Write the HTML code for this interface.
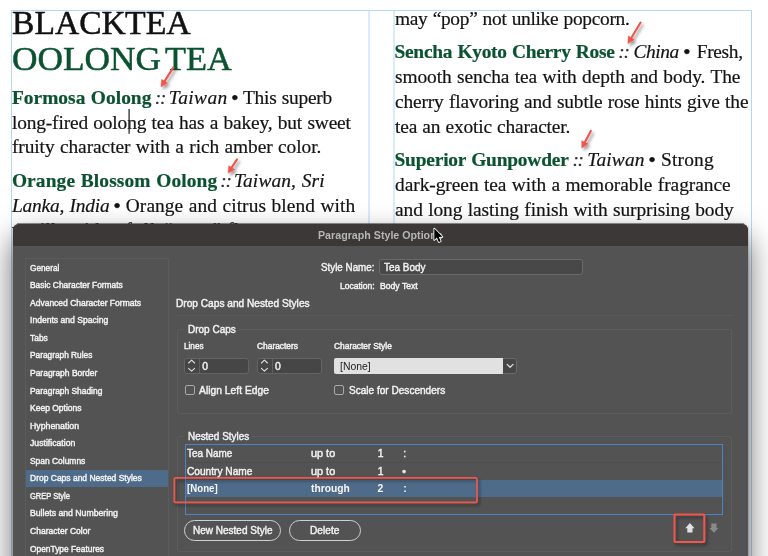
<!DOCTYPE html>
<html lang="en">
<head>
<meta charset="utf-8">
<title>Paragraph Style Options</title>
<style>
html,body{margin:0;padding:0;background:#fff;}
body{width:768px;height:556px;position:relative;overflow:hidden;}
.abs,.t,.abs *{position:absolute;box-sizing:border-box;}
.t{white-space:pre;display:block;transform-origin:0 50%;}
#doc{left:0;top:0;width:768px;height:556px;}
#doc,#dlgc{will-change:transform;}
#doc .t{word-spacing:.6px;-webkit-text-stroke:.2px currentColor;}
.guide{background:#b3d7f8;}
#dialog{left:13px;top:224px;width:735px;height:360px;background:#535353;border-radius:6px 6px 0 0;
  box-shadow:0 14px 30px rgba(0,0,0,.62),0 0 2px rgba(0,0,0,.45);}
#titlebar{left:0;top:0;width:735px;height:22px;background:#3c3837;border-radius:6px 6px 0 0;}
.grp{border:1px solid #5c5c5c;border-radius:2px;}
.fld{background:#464646;border:1px solid #646464;border-radius:3px;}
.cb{border:1px solid #a8a8a8;border-radius:2px;width:9.4px;height:9.6px;}
.btn{border:1.2px solid #d0d0d0;border-radius:11px;height:20.9px;top:520px;}
</style>
</head>
<body>
<div id="doc" class="abs">
  <div class="guide" style="left:11px;top:10px;width:741px;height:1px"></div>
  <div class="guide" style="left:11px;top:10px;width:1px;height:546px"></div>
  <div class="guide" style="left:368px;top:11px;width:2px;height:545px;background:#dbeafc"></div>
  <div class="guide" style="left:393px;top:11px;width:2px;height:545px;background:#dbeafc"></div>
  <div class="guide" style="left:751px;top:10px;width:1px;height:546px"></div>
<span class="t" id="t0" style="left:12.40px;top:23.01px;font:33.8px/0 'Liberation Serif', serif;color:#111;transform:scaleX(0.9935);-webkit-text-stroke:0.5px #111;">BLACK</span>
<span class="t" id="t1" style="left:125.40px;top:23.01px;font:33.8px/0 'Liberation Serif', serif;color:#111;transform:scaleX(1.0015);-webkit-text-stroke:0.5px #111;">TEA</span>
<span class="t" id="t2" style="left:12.40px;top:59.01px;font:33.8px/0 'Liberation Serif', serif;color:#0b5230;transform:scaleX(1.0449);-webkit-text-stroke:0.5px #0b5230;">OOLONG</span>
<span class="t" id="t3" style="left:165.20px;top:59.01px;font:33.8px/0 'Liberation Serif', serif;color:#0b5230;transform:scaleX(1.0167);-webkit-text-stroke:0.5px #0b5230;">TEA</span>
<span class="t" id="t4" style="left:11.90px;top:98.02px;font:bold 19.4px/0 'Liberation Serif', serif;color:#0b5230;letter-spacing:0.036px;">Formosa Oolong</span>
<span class="t" id="t5" style="left:154.80px;top:98.02px;font:italic 19.4px/0 'Liberation Serif', serif;color:#333;letter-spacing:-1.260px;">::</span>
<span class="t" id="t6" style="left:168.80px;top:98.02px;font:italic 19.4px/0 'Liberation Serif', serif;color:#141414;letter-spacing:0.396px;">Taiwan</span>
<span class="t" id="t7" style="left:231.10px;top:98.00px;font:22px/0 'Liberation Serif', serif;color:#141414;">•</span>
<span class="t" id="t8" style="left:243.00px;top:98.02px;font:19.4px/0 'Liberation Serif', serif;color:#141414;letter-spacing:-0.243px;">This superb</span>
<span class="t" id="t9" style="left:11.90px;top:123.02px;font:19.4px/0 'Liberation Serif', serif;color:#141414;letter-spacing:-0.147px;">long-fired oolong tea has a bakey, but sweet</span>
<span class="t" id="t10" style="left:11.90px;top:147.01px;font:19.4px/0 'Liberation Serif', serif;color:#141414;letter-spacing:-0.067px;">fruity character with a rich amber color.</span>
<span class="t" id="t11" style="left:11.90px;top:181.01px;font:bold 19.4px/0 'Liberation Serif', serif;color:#0b5230;letter-spacing:0.131px;">Orange Blossom Oolong</span>
<span class="t" id="t12" style="left:220.20px;top:181.01px;font:italic 19.4px/0 'Liberation Serif', serif;color:#333;letter-spacing:-1.260px;">::</span>
<span class="t" id="t13" style="left:233.90px;top:181.01px;font:italic 19.4px/0 'Liberation Serif', serif;color:#141414;letter-spacing:0.136px;">Taiwan, Sri</span>
<span class="t" id="t14" style="left:11.90px;top:206.01px;font:italic 19.4px/0 'Liberation Serif', serif;color:#141414;letter-spacing:-0.182px;">Lanka, India</span>
<span class="t" id="t15" style="left:113.20px;top:206.01px;font:22px/0 'Liberation Serif', serif;color:#141414;">•</span>
<span class="t" id="t16" style="left:125.80px;top:206.01px;font:19.4px/0 'Liberation Serif', serif;color:#141414;letter-spacing:0.070px;">Orange and citrus blend with</span>
<span class="t" id="t17" style="left:11.90px;top:230.01px;font:19.4px/0 'Liberation Serif', serif;color:#141414;letter-spacing:0.027px;">vanilla with a</span>
<span class="t" id="t18" style="left:125.60px;top:230.01px;font:19.4px/0 'Liberation Serif', serif;color:#141414;letter-spacing:0.988px;">full</span>
<span class="t" id="t19" style="left:163.50px;top:230.01px;font:19.4px/0 'Liberation Serif', serif;color:#141414;letter-spacing:-1.008px;">“sunny”</span>
<span class="t" id="t20" style="left:227.30px;top:230.01px;font:19.4px/0 'Liberation Serif', serif;color:#141414;letter-spacing:0.104px;">flavor.</span>
<span class="t" id="t21" style="left:395.00px;top:19.02px;font:19.4px/0 'Liberation Serif', serif;color:#141414;letter-spacing:-0.297px;">may “pop” not unlike popcorn.</span>
<span class="t" id="t22" style="left:394.50px;top:52.02px;font:bold 19.4px/0 'Liberation Serif', serif;color:#0b5230;letter-spacing:-0.260px;">Sencha Kyoto Cherry Rose</span>
<span class="t" id="t23" style="left:618.30px;top:52.02px;font:italic 19.4px/0 'Liberation Serif', serif;color:#333;letter-spacing:-1.260px;">::</span>
<span class="t" id="t24" style="left:633.40px;top:52.02px;font:italic 19.4px/0 'Liberation Serif', serif;color:#141414;letter-spacing:-0.405px;">China</span>
<span class="t" id="t25" style="left:683.10px;top:52.00px;font:22px/0 'Liberation Serif', serif;color:#141414;">•</span>
<span class="t" id="t26" style="left:696.80px;top:52.02px;font:19.4px/0 'Liberation Serif', serif;color:#141414;letter-spacing:-0.347px;">Fresh,</span>
<span class="t" id="t27" style="left:395.00px;top:77.02px;font:19.4px/0 'Liberation Serif', serif;color:#141414;letter-spacing:-0.071px;">smooth sencha tea with depth and body. The</span>
<span class="t" id="t28" style="left:395.00px;top:102.02px;font:19.4px/0 'Liberation Serif', serif;color:#141414;letter-spacing:-0.144px;">cherry flavoring and subtle rose hints give the</span>
<span class="t" id="t29" style="left:395.00px;top:127.02px;font:19.4px/0 'Liberation Serif', serif;color:#141414;letter-spacing:-0.180px;">tea an exotic character.</span>
<span class="t" id="t30" style="left:394.50px;top:160.01px;font:bold 19.4px/0 'Liberation Serif', serif;color:#0b5230;letter-spacing:-0.187px;">Superior Gunpowder</span>
<span class="t" id="t31" style="left:572.40px;top:160.01px;font:italic 19.4px/0 'Liberation Serif', serif;color:#333;letter-spacing:-1.260px;">::</span>
<span class="t" id="t32" style="left:587.30px;top:160.01px;font:italic 19.4px/0 'Liberation Serif', serif;color:#141414;letter-spacing:0.156px;">Taiwan</span>
<span class="t" id="t33" style="left:648.20px;top:160.01px;font:22px/0 'Liberation Serif', serif;color:#141414;">•</span>
<span class="t" id="t34" style="left:661.10px;top:160.01px;font:19.4px/0 'Liberation Serif', serif;color:#141414;letter-spacing:0.156px;">Strong</span>
<span class="t" id="t35" style="left:395.00px;top:185.01px;font:19.4px/0 'Liberation Serif', serif;color:#141414;letter-spacing:-0.043px;">dark-green tea with a memorable fragrance</span>
<span class="t" id="t36" style="left:395.00px;top:210.01px;font:19.4px/0 'Liberation Serif', serif;color:#141414;letter-spacing:-0.071px;">and long lasting finish with surprising body</span>
  <svg class="abs" style="left:0;top:0" width="768" height="556" viewBox="0 0 768 556">
    <defs>
      <filter id="sh" x="-50%" y="-50%" width="200%" height="200%"><feDropShadow dx="2" dy="2.5" stdDeviation="1.8" flood-color="#000" flood-opacity=".4"/></filter>
    </defs>
    <line x1="129.1" y1="109.1" x2="129.1" y2="133.7" stroke="#2c2c2c" stroke-width="1.3"/>
    <g filter="url(#sh)">
<path d="M173.40 67.40 L164.02 82.08" stroke="#f0544b" stroke-width="2.1" stroke-linecap="round" fill="none"/>
<path d="M161.00 86.80 L161.61 79.35 L167.50 83.12 Z" fill="#f0544b" stroke="#f0544b" stroke-width=".5" stroke-linejoin="round"/>
<path d="M237.00 159.40 L231.15 168.40" stroke="#f0544b" stroke-width="2.1" stroke-linecap="round" fill="none"/>
<path d="M228.10 173.10 L228.76 165.66 L234.63 169.47 Z" fill="#f0544b" stroke="#f0544b" stroke-width=".5" stroke-linejoin="round"/>
<path d="M640.60 22.50 L630.80 38.71" stroke="#f0544b" stroke-width="2.1" stroke-linecap="round" fill="none"/>
<path d="M627.90 43.50 L628.32 36.04 L634.31 39.66 Z" fill="#f0544b" stroke="#f0544b" stroke-width=".5" stroke-linejoin="round"/>
<path d="M590.80 130.90 L584.40 143.14" stroke="#f0544b" stroke-width="2.1" stroke-linecap="round" fill="none"/>
<path d="M581.80 148.10 L581.76 140.63 L587.96 143.87 Z" fill="#f0544b" stroke="#f0544b" stroke-width=".5" stroke-linejoin="round"/>
    </g>
  </svg>
</div>
<div id="dialog" class="abs">
  <div id="titlebar"></div>
  <div style="left:4px;top:-1px;width:727px;height:1px;background:rgba(60,56,55,.5)"></div>
</div>
<div id="dlgc" class="abs" style="left:0;top:0;width:768px;height:556px">
  <!-- sidebar -->
  <div style="left:25px;top:257.5px;width:144.2px;height:310px;border:1px solid #5b5b5b;"></div>
  <div style="left:26px;top:469.5px;width:142.2px;height:17.3px;background:#4e6b89;"></div>
  <!-- style name -->
  <div class="fld" style="left:379.3px;top:258.8px;width:203.5px;height:16px;background:#484848;border-color:#6a6a6a"></div>
  <div style="left:176px;top:315px;width:556px;height:1px;background:#5a5a5a"></div>
  <!-- drop caps group -->
  <div class="grp" style="left:176.8px;top:328.6px;width:555px;height:85.8px"></div>
  <div style="left:184px;top:326px;width:55px;height:6px;background:#535353"></div>
  <div class="fld" style="left:184.2px;top:357.6px;width:64.6px;height:16.2px"><div style="left:13.5px;top:0;width:1px;height:14.2px;background:#606060"></div></div>
  <div class="fld" style="left:257px;top:357.6px;width:64.6px;height:16.2px"><div style="left:13.5px;top:0;width:1px;height:14.2px;background:#606060"></div></div>
  <div class="fld" style="left:495px;top:357.8px;width:22.4px;height:16px;border-radius:0 3px 3px 0;border-color:#6a6a6a"></div>
  <div style="left:333.7px;top:357.8px;width:169.2px;height:16px;background:#e1e1e1;border-radius:2px 0 0 2px"></div>
  <svg class="abs" style="left:0;top:0" width="768" height="556" viewBox="0 0 768 556" fill="none" stroke="#dedede" stroke-width="1.1" stroke-linecap="round" stroke-linejoin="round">
    <path d="M188.6 363 L191.6 360.2 L194.6 363 M188.6 368.4 L191.6 371.2 L194.6 368.4"/>
    <path d="M261.4 363 L264.4 360.2 L267.4 363 M261.4 368.4 L264.4 371.2 L267.4 368.4"/>
    <path d="M507.2 364.4 L510.1 367.3 L513 364.4" stroke-width="1.3"/>
  </svg>
  <div class="cb" style="left:185.2px;top:385.4px"></div>
  <div class="cb" style="left:334.4px;top:385.4px"></div>
  <!-- nested styles group -->
  <div class="grp" style="left:176.8px;top:436.2px;width:555px;height:116px"></div>
  <div style="left:184px;top:433px;width:68px;height:6px;background:#535353"></div>
  <div style="left:185.2px;top:444.1px;width:538.2px;height:70.8px;border:1.1px solid #4a84c4;background:#535353"></div>
  <div style="left:186.3px;top:462px;width:536px;height:1px;background:#4e4e4e"></div>
  <div style="left:186.3px;top:479.7px;width:536px;height:17.6px;background:#4e6b89"></div>
  <div class="btn" style="left:183.8px;width:97.2px"></div>
  <div class="btn" style="left:288.5px;width:72.9px"></div>
  <svg class="abs" style="left:0;top:0" width="768" height="556" viewBox="0 0 768 556">
    <path d="M689.9 523.1 L694.5 528.2 L692.5 528.2 L692.5 532.4 L687.3 532.4 L687.3 528.2 L685.3 528.2 Z" fill="#e2e2e2"/>
    <path d="M713.9 532.7 L718.3 528 L716.5 528 L716.5 523.4 L711.3 523.4 L711.3 528 L709.5 528 Z" fill="#8a8a8a"/>
    <g filter="url(#sh)" fill="none" stroke="#f0564c">
      <rect x="174.3" y="477.9" width="302.7" height="24.4" rx="1" stroke-width="1.7"/>
      <rect x="674.5" y="514.5" width="29.8" height="27.5" rx="1" stroke-width="2"/>
    </g>
  </svg>
<span class="t" id="t37" style="left:318.20px;top:235.01px;font:bold 11.2px/0 'Liberation Sans', sans-serif;color:#b6b6b6;transform:scaleX(0.9543);">Paragraph Style Options</span>
<span class="t" id="t38" style="left:29.70px;top:268.00px;font:8.7px/0 'Liberation Sans', sans-serif;color:#f0f0f0;transform:scaleX(0.9475);-webkit-text-stroke:0.45px currentColor;">General</span>
<span class="t" id="t39" style="left:29.70px;top:285.00px;font:8.7px/0 'Liberation Sans', sans-serif;color:#f0f0f0;transform:scaleX(0.9659);-webkit-text-stroke:0.45px currentColor;">Basic Character Formats</span>
<span class="t" id="t40" style="left:29.70px;top:303.00px;font:8.7px/0 'Liberation Sans', sans-serif;color:#f0f0f0;transform:scaleX(0.9787);-webkit-text-stroke:0.45px currentColor;">Advanced Character Formats</span>
<span class="t" id="t41" style="left:29.70px;top:320.00px;font:8.7px/0 'Liberation Sans', sans-serif;color:#f0f0f0;transform:scaleX(0.9884);-webkit-text-stroke:0.45px currentColor;">Indents and Spacing</span>
<span class="t" id="t42" style="left:29.70px;top:338.00px;font:8.7px/0 'Liberation Sans', sans-serif;color:#f0f0f0;transform:scaleX(0.9695);-webkit-text-stroke:0.45px currentColor;">Tabs</span>
<span class="t" id="t43" style="left:29.70px;top:355.00px;font:8.7px/0 'Liberation Sans', sans-serif;color:#f0f0f0;transform:scaleX(0.9555);-webkit-text-stroke:0.45px currentColor;">Paragraph Rules</span>
<span class="t" id="t44" style="left:29.70px;top:373.00px;font:8.7px/0 'Liberation Sans', sans-serif;color:#f0f0f0;transform:scaleX(0.9745);-webkit-text-stroke:0.45px currentColor;">Paragraph Border</span>
<span class="t" id="t45" style="left:29.70px;top:391.00px;font:8.7px/0 'Liberation Sans', sans-serif;color:#f0f0f0;transform:scaleX(0.9656);-webkit-text-stroke:0.45px currentColor;">Paragraph Shading</span>
<span class="t" id="t46" style="left:29.70px;top:408.00px;font:8.7px/0 'Liberation Sans', sans-serif;color:#f0f0f0;transform:scaleX(0.9790);-webkit-text-stroke:0.45px currentColor;">Keep Options</span>
<span class="t" id="t47" style="left:29.70px;top:426.00px;font:8.7px/0 'Liberation Sans', sans-serif;color:#f0f0f0;transform:scaleX(1.0052);-webkit-text-stroke:0.45px currentColor;">Hyphenation</span>
<span class="t" id="t48" style="left:29.70px;top:443.00px;font:8.7px/0 'Liberation Sans', sans-serif;color:#f0f0f0;transform:scaleX(0.9980);-webkit-text-stroke:0.45px currentColor;">Justification</span>
<span class="t" id="t49" style="left:29.70px;top:461.00px;font:8.7px/0 'Liberation Sans', sans-serif;color:#f0f0f0;transform:scaleX(0.9704);-webkit-text-stroke:0.45px currentColor;">Span Columns</span>
<span class="t" id="t50" style="left:29.70px;top:478.00px;font:8.7px/0 'Liberation Sans', sans-serif;color:#f0f0f0;transform:scaleX(0.9768);-webkit-text-stroke:0.45px currentColor;">Drop Caps and Nested Styles</span>
<span class="t" id="t51" style="left:29.70px;top:496.00px;font:8.7px/0 'Liberation Sans', sans-serif;color:#f0f0f0;transform:scaleX(0.8614);-webkit-text-stroke:0.45px currentColor;">GREP Style</span>
<span class="t" id="t52" style="left:29.70px;top:513.00px;font:8.7px/0 'Liberation Sans', sans-serif;color:#f0f0f0;transform:scaleX(0.9990);-webkit-text-stroke:0.45px currentColor;">Bullets and Numbering</span>
<span class="t" id="t53" style="left:29.70px;top:531.00px;font:8.7px/0 'Liberation Sans', sans-serif;color:#f0f0f0;transform:scaleX(0.9832);-webkit-text-stroke:0.45px currentColor;">Character Color</span>
<span class="t" id="t54" style="left:29.70px;top:549.00px;font:8.7px/0 'Liberation Sans', sans-serif;color:#f0f0f0;transform:scaleX(0.9642);-webkit-text-stroke:0.45px currentColor;">OpenType Features</span>
<span class="t" id="t55" style="left:320.70px;top:267.00px;font:10.6px/0 'Liberation Sans', sans-serif;color:#f0f0f0;transform:scaleX(0.9272);-webkit-text-stroke:0.45px currentColor;">Style Name:</span>
<span class="t" id="t56" style="left:383.80px;top:267.00px;font:10.6px/0 'Liberation Sans', sans-serif;color:#f0f0f0;transform:scaleX(0.9372);-webkit-text-stroke:0.45px currentColor;">Tea Body</span>
<span class="t" id="t57" style="left:339.70px;top:286.01px;font:8.4px/0 'Liberation Sans', sans-serif;color:#f0f0f0;transform:scaleX(1.0147);-webkit-text-stroke:0.45px currentColor;">Location:</span>
<span class="t" id="t58" style="left:379.70px;top:286.01px;font:8.4px/0 'Liberation Sans', sans-serif;color:#f0f0f0;transform:scaleX(1.0294);-webkit-text-stroke:0.45px currentColor;">Body Text</span>
<span class="t" id="t59" style="left:176.40px;top:304.00px;font:10.2px/0 'Liberation Sans', sans-serif;color:#f0f0f0;transform:scaleX(0.9954);-webkit-text-stroke:0.45px currentColor;">Drop Caps and Nested Styles</span>
<span class="t" id="t60" style="left:188.00px;top:330.00px;font:10.2px/0 'Liberation Sans', sans-serif;color:#f0f0f0;transform:scaleX(0.9815);-webkit-text-stroke:0.45px currentColor;">Drop Caps</span>
<span class="t" id="t61" style="left:184.20px;top:346.01px;font:8.4px/0 'Liberation Sans', sans-serif;color:#f0f0f0;transform:scaleX(0.9735);-webkit-text-stroke:0.45px currentColor;">Lines</span>
<span class="t" id="t62" style="left:257.00px;top:346.01px;font:8.4px/0 'Liberation Sans', sans-serif;color:#f0f0f0;transform:scaleX(1.0008);-webkit-text-stroke:0.45px currentColor;">Characters</span>
<span class="t" id="t63" style="left:333.70px;top:346.01px;font:8.4px/0 'Liberation Sans', sans-serif;color:#f0f0f0;transform:scaleX(1.0014);-webkit-text-stroke:0.45px currentColor;">Character Style</span>
<span class="t" id="t64" style="left:202.30px;top:367.01px;font:10.4px/0 'Liberation Sans', sans-serif;color:#f0f0f0;-webkit-text-stroke:0.45px currentColor;">0</span>
<span class="t" id="t65" style="left:275.10px;top:367.01px;font:10.4px/0 'Liberation Sans', sans-serif;color:#f0f0f0;-webkit-text-stroke:0.45px currentColor;">0</span>
<span class="t" id="t66" style="left:339.80px;top:367.01px;font:10.4px/0 'Liberation Sans', sans-serif;color:#222;transform:scaleX(1.0024);">[None]</span>
<span class="t" id="t67" style="left:199.40px;top:390.00px;font:10.6px/0 'Liberation Sans', sans-serif;color:#f0f0f0;transform:scaleX(0.9741);-webkit-text-stroke:0.45px currentColor;">Align Left Edge</span>
<span class="t" id="t68" style="left:348.60px;top:390.00px;font:10.6px/0 'Liberation Sans', sans-serif;color:#f0f0f0;transform:scaleX(0.9498);-webkit-text-stroke:0.45px currentColor;">Scale for Descenders</span>
<span class="t" id="t69" style="left:187.60px;top:437.01px;font:10.4px/0 'Liberation Sans', sans-serif;color:#f0f0f0;transform:scaleX(0.9531);-webkit-text-stroke:0.45px currentColor;">Nested Styles</span>
<span class="t" id="t70" style="left:187.20px;top:454.01px;font:10.4px/0 'Liberation Sans', sans-serif;color:#f0f0f0;transform:scaleX(0.9565);-webkit-text-stroke:0.45px currentColor;">Tea Name</span>
<span class="t" id="t71" style="left:311.30px;top:454.01px;font:10.4px/0 'Liberation Sans', sans-serif;color:#f0f0f0;transform:scaleX(1.0465);-webkit-text-stroke:0.45px currentColor;">up to</span>
<span class="t" id="t72" style="left:377.80px;top:454.01px;font:10.4px/0 'Liberation Sans', sans-serif;color:#f0f0f0;-webkit-text-stroke:0.45px currentColor;">1</span>
<span class="t" id="t73" style="left:403.30px;top:454.01px;font:10.4px/0 'Liberation Sans', sans-serif;color:#f0f0f0;-webkit-text-stroke:0.45px currentColor;">:</span>
<span class="t" id="t74" style="left:187.20px;top:472.01px;font:10.4px/0 'Liberation Sans', sans-serif;color:#f0f0f0;transform:scaleX(0.9761);-webkit-text-stroke:0.45px currentColor;">Country Name</span>
<span class="t" id="t75" style="left:311.30px;top:472.01px;font:10.4px/0 'Liberation Sans', sans-serif;color:#f0f0f0;transform:scaleX(1.0465);-webkit-text-stroke:0.45px currentColor;">up to</span>
<span class="t" id="t76" style="left:377.80px;top:472.01px;font:10.4px/0 'Liberation Sans', sans-serif;color:#f0f0f0;-webkit-text-stroke:0.45px currentColor;">1</span>
<span class="t" id="t77" style="left:402.30px;top:472.01px;font:10.4px/0 'Liberation Sans', sans-serif;color:#f0f0f0;-webkit-text-stroke:0.45px currentColor;">•</span>
<span class="t" id="t78" style="left:187.20px;top:489.01px;font:bold 10.4px/0 'Liberation Sans', sans-serif;color:#f6f6f6;transform:scaleX(0.9330);">[None]</span>
<span class="t" id="t79" style="left:311.30px;top:489.01px;font:bold 10.4px/0 'Liberation Sans', sans-serif;color:#f6f6f6;transform:scaleX(0.9860);">through</span>
<span class="t" id="t80" style="left:377.50px;top:489.01px;font:bold 10.4px/0 'Liberation Sans', sans-serif;color:#f6f6f6;">2</span>
<span class="t" id="t81" style="left:403.30px;top:489.01px;font:bold 10.4px/0 'Liberation Sans', sans-serif;color:#f6f6f6;">:</span>
<span class="t" id="t82" style="left:192.90px;top:530.00px;font:10.5px/0 'Liberation Sans', sans-serif;color:#f0f0f0;transform:scaleX(0.9526);-webkit-text-stroke:0.45px currentColor;">New Nested Style</span>
<span class="t" id="t83" style="left:310.10px;top:530.00px;font:10.5px/0 'Liberation Sans', sans-serif;color:#f0f0f0;transform:scaleX(0.9684);-webkit-text-stroke:0.45px currentColor;">Delete</span>
  <svg class="abs" style="left:0;top:0" width="768" height="556" viewBox="0 0 768 556">
    <!-- mouse cursor -->
    <path d="M434.3 228.6 L434.3 240 L436.9 237.6 L438.8 242 L440.7 241.2 L438.8 236.9 L442.4 236.8 Z" fill="#000" stroke="#fff" stroke-width="1.7" stroke-linejoin="round" paint-order="stroke"/>
  </svg>
</div>
</body>
</html>
